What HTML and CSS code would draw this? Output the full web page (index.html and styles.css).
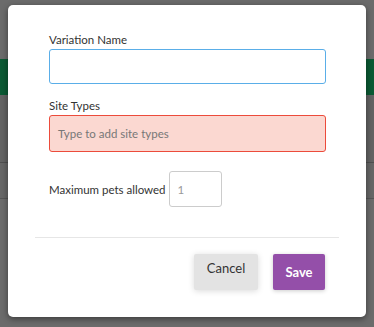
FILE: index.html
```html
<!DOCTYPE html>
<html>
<head>
<meta charset="utf-8">
<link rel="stylesheet" href="styles.css">
</head>
<body>
<div class="page">
  <div class="band-top"></div>
  <div class="band-green"></div>
  <div class="band-mid"></div>
  <div class="band-row"></div>
  <div class="band-rest"></div>
</div>
<div class="overlay">
  <div class="modal">
    <div class="body">
      <label class="label">Variation Name</label>
      <div class="input focus"></div>
      <label class="label second">Site Types</label>
      <div class="input error"><span class="placeholder">Type to add site types</span></div>
      <div class="pets">
        <span class="pets-label">Maximum pets allowed</span>
        <div class="num"><span class="placeholder">1</span></div>
      </div>
    </div>
    <div class="footer">
      <button class="btn cancel">Cancel</button>
      <button class="btn save">Save</button>
    </div>
  </div>
</div>
</body>
</html>
```
FILE: styles.css
```css
html, body { margin: 0; padding: 0; }
body {
  width: 374px; height: 327px; overflow: hidden;
  background: #6a6a6a;
  font-family: "Lato", "Open Sans", sans-serif;
}
.page { display: flex; flex-direction: column; }
.band-top { height: 59px; background: #6b6b6b; }
.band-green { height: 36px; background: #0b5a34; }
.band-mid { height: 67px; background: #636363; border-bottom: 1px solid #4f4f4f; }
.band-row { height: 35px; background: #666; border-bottom: 1px solid #555; }
.band-rest { height: 130px; background: #6b6b6b; }

.overlay { position: absolute; left: 0; top: 0; width: 374px; height: 327px; }
.modal {
  position: absolute; left: 8px; top: 5px; width: 358px; height: 312px;
  background: #fff; border-radius: 5px;
  box-shadow: 0 2px 6px rgba(0,0,0,0.45);
  box-sizing: border-box;
}
.body { padding: 28px 40px 0 41px; display: flex; flex-direction: column; }
.label { font-size: 11.5px; color: #333; line-height: 14px; margin-bottom: 2px; }
.label.second { margin-top: 15px; }
.input {
  height: 35px; box-sizing: border-box; border-radius: 3px;
  border: 1px solid #ccc; display: flex; align-items: center; padding-left: 8px;
}
.input.focus { border-color: #5aaee8; }
.input.error { height: 37px; background: #fbd8d1; border-color: #ec4b3b; }
.placeholder { font-size: 11.5px; color: #777; }
.pets { display: flex; align-items: center; margin-top: 19px; }
.pets-label { font-size: 11.5px; color: #333; margin-right: 3px; }
.num {
  width: 53px; height: 36px; box-sizing: border-box;
  border: 1px solid #ccc; border-radius: 3px;
  display: flex; align-items: center; padding-left: 8px;
}
.num .placeholder { color: #999; }
.footer {
  margin: 30px 27px 0; border-top: 1px solid #e6e6e6;
  padding: 16px 14px 0 0; display: flex; justify-content: flex-end; gap: 15px;
}
.btn {
  height: 36px; border: none; border-radius: 2px; font-family: inherit;
  font-size: 13px; padding: 0; cursor: pointer;
}
.cancel {
  width: 64px; background: #e3e3e3; color: #333;
  box-shadow: 0 1px 6px rgba(0,0,0,0.15); padding-bottom: 8px;
}
.save {
  width: 52px; background: #944fa9; color: #fff; font-weight: 700;
  box-shadow: 0 1px 4px rgba(0,0,0,0.2);
}
```
